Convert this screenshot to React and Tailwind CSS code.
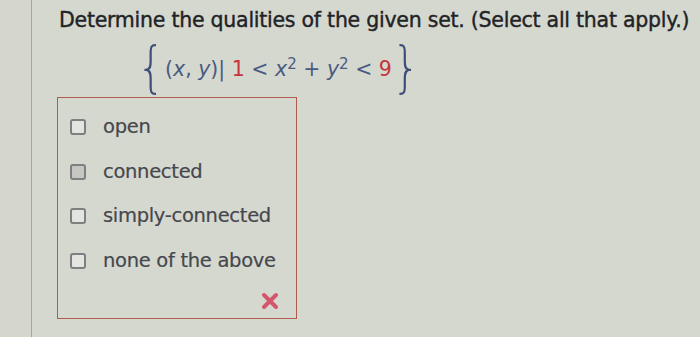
import { useState } from 'react'

const options = ['open', 'connected', 'simply-connected', 'none of the above']

function Box({ filled }) {
  return (
    <span
      className={`inline-block w-[16px] h-[16px] rounded-[3px] border-2 border-[#7d7f80] ${
        filled ? 'bg-[#c6c7c2]' : 'bg-[#e4e5e0]'
      }`}
    />
  )
}

export default function App() {
  const [checked] = useState([false, true, false, false])

  return (
    <div
      className="w-[700px] h-[337px] bg-[#d5d8cf] flex overflow-hidden"
      style={{ fontFamily: '"DejaVu Sans", Verdana, sans-serif' }}
    >
      <div className="w-[32px] shrink-0 border-r border-[#a3a4ad] bg-[#d6d7cc]" />
      <div className="pl-[27px] pt-[5px]">
        <h1 className="text-[20.5px] text-[#222326] tracking-[-0.25px] whitespace-nowrap [-webkit-text-stroke:0.4px_#222326]">
          Determine the qualities of the given set. (Select all that apply.)
        </h1>

        <div className="flex items-center ml-[78px] mt-[9px] h-[50px] text-[#4a5a80]">
          <span className="text-[44px] leading-none text-[#3e4e78] font-light scale-y-[1.25] -mt-[6px]">{'{'}</span>
          <span className="text-[20.5px] whitespace-nowrap">
            (<i>x</i>, <i>y</i>)| <span className="text-[#c8343c]">1</span> &lt; <i>x</i>
            <sup className="text-[15px]">2</sup> + <i>y</i>
            <sup className="text-[15px]">2</sup> &lt; <span className="text-[#c8343c]">9</span>
          </span>
          <span className="text-[44px] leading-none text-[#3e4e78] font-light scale-y-[1.25] -mt-[6px]">{'}'}</span>
        </div>

        <div className="mt-[2px] -ml-[2px] w-[240px] h-[222px] border border-[#b25a4b] flex flex-col pl-[12px] pt-[7px]">
          {options.map((o, i) => (
            <div key={o} className="flex items-center h-[44.5px]">
              <Box filled={checked[i]} />
              <span className="ml-[17px] text-[19.5px] text-[#45474c] tracking-[-0.3px] [-webkit-text-stroke:0.2px_#45474c]">{o}</span>
            </div>
          ))}
          <div className="flex justify-end pr-[16px] mt-[8px]">
            <svg width="20" height="20" viewBox="0 0 20 20">
              <path d="M4 4 L16 16 M16 4 L4 16" stroke="#d4566c" strokeWidth="4" strokeLinecap="round" />
            </svg>
          </div>
        </div>
      </div>
    </div>
  )
}
